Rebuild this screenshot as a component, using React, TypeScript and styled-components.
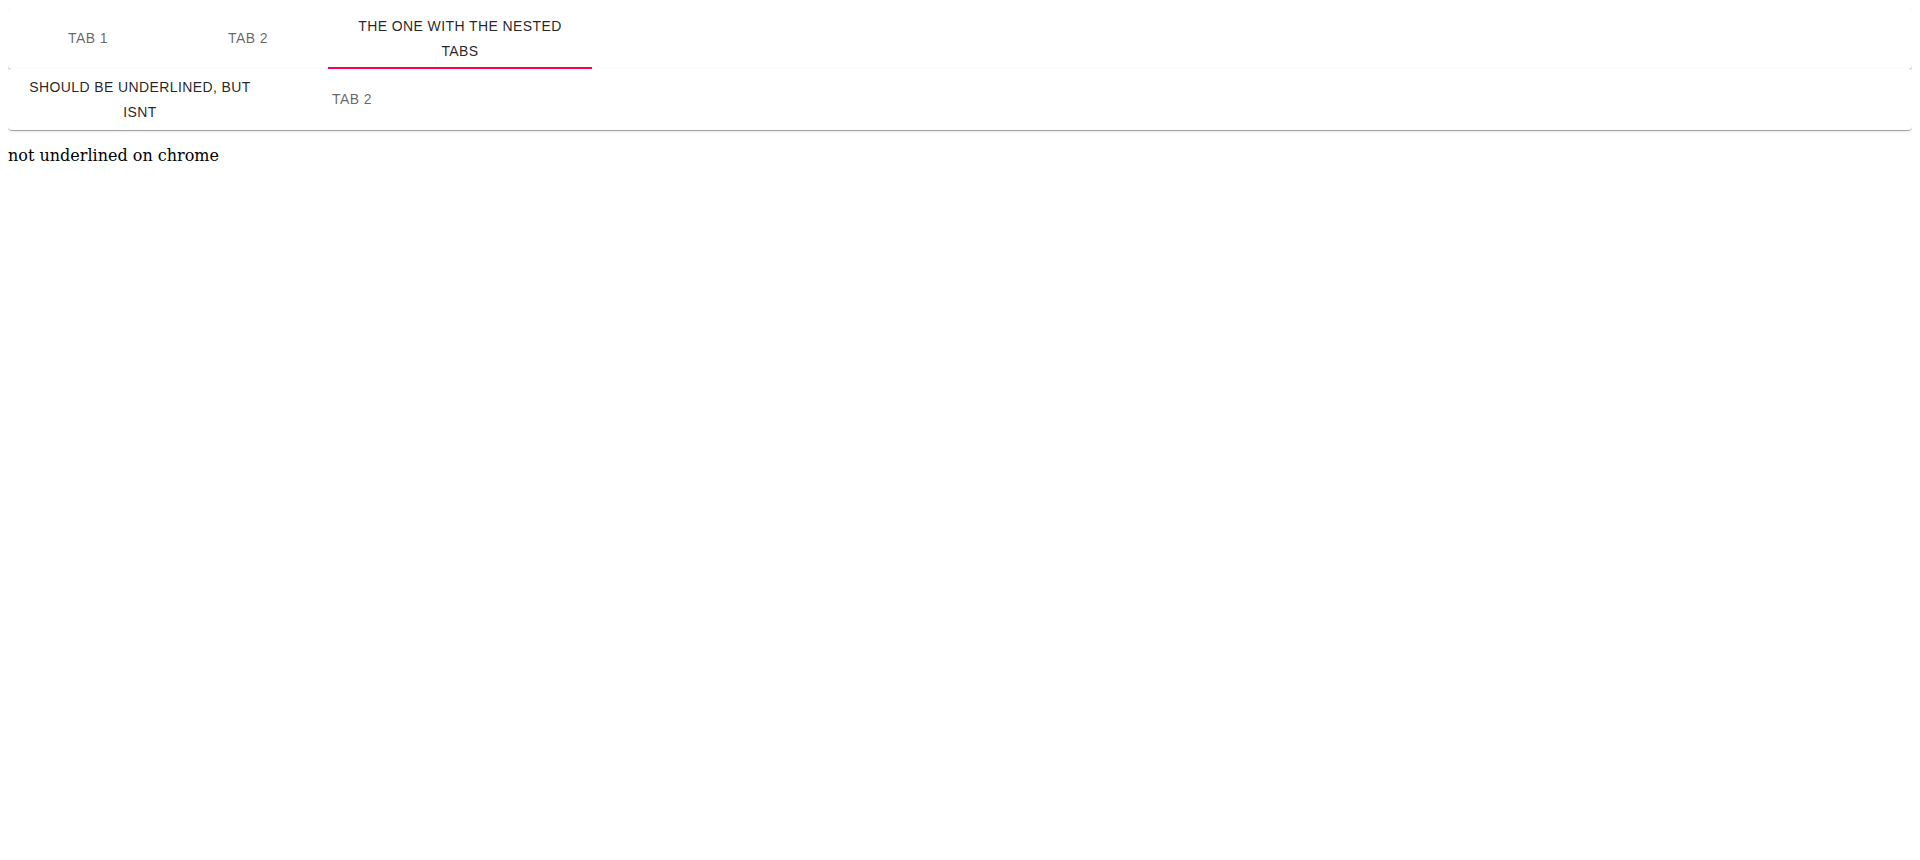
import React, { useState } from 'react';
import styled, { createGlobalStyle } from 'styled-components';

const GlobalStyle = createGlobalStyle`
  body {
    margin: 8px;
    background: #fff;
    font-family: "DejaVu Serif", serif;
  }
`;

const Paper = styled.div`
  position: relative;
  background: #fff;
  color: rgba(0, 0, 0, 0.87);
  border-radius: 4px;
  box-shadow: 0px 2px 1px -1px rgba(0, 0, 0, 0.2), 0px 1px 1px 0px rgba(0, 0, 0, 0.14),
    0px 1px 3px 0px rgba(0, 0, 0, 0.12);
`;

const TabRow = styled.div`
  display: flex;
  min-height: 48px;
  overflow: hidden;
`;

const Tab = styled.button<{ $selected: boolean }>`
  position: relative;
  display: inline-flex;
  align-items: center;
  justify-content: center;
  box-sizing: border-box;
  min-width: 160px;
  max-width: 264px;
  min-height: 48px;
  padding: 6px 12px;
  margin: 0;
  border: 0;
  background: transparent;
  cursor: pointer;
  color: inherit;
  opacity: ${p => (p.$selected ? 1 : 0.7)};
  font-family: "Liberation Sans", Arial, sans-serif;
  font-size: 14px;
  font-weight: 400;
  line-height: 1.75;
  letter-spacing: 0.02857em;
  text-transform: uppercase;
  text-align: center;
  flex-shrink: 0;
`;

const TabLabel = styled.span`
  width: 100%;
  display: block;
`;

const Indicator = styled.span`
  position: absolute;
  left: 0;
  right: 0;
  bottom: 0;
  height: 2px;
  background: #f50057;
`;

const Note = styled.p`
  margin: 16px 0;
  font-family: "DejaVu Serif", serif;
  font-size: 16px;
  color: #000;
`;

interface TabsProps {
  labels: string[];
  value: number;
  onChange: (i: number) => void;
  // the nested bar loses its indicator, which is the bug being shown
  noIndicator?: boolean;
}

function Tabs(props: TabsProps) {
  return (
    <Paper>
      <TabRow>
        {props.labels.map((label, i) => (
          <Tab key={i} $selected={props.value === i} onClick={() => props.onChange(i)}>
            <TabLabel>{label}</TabLabel>
            {props.value === i && !props.noIndicator && <Indicator />}
          </Tab>
        ))}
      </TabRow>
    </Paper>
  );
}

export default function App() {
  const [outer, setOuter] = useState<number>(2);
  const [inner, setInner] = useState<number>(0);

  return (
    <>
      <GlobalStyle />
      <Tabs labels={['Tab 1', 'Tab 2', 'The one with the nested tabs']} value={outer} onChange={setOuter} />
      {outer === 2 && (
        <>
          <Tabs
            labels={['Should be underlined, but isnt', 'Tab 2']}
            value={inner}
            onChange={setInner}
            noIndicator={inner === 0}
          />
          <Note>not underlined on chrome</Note>
        </>
      )}
    </>
  );
}
